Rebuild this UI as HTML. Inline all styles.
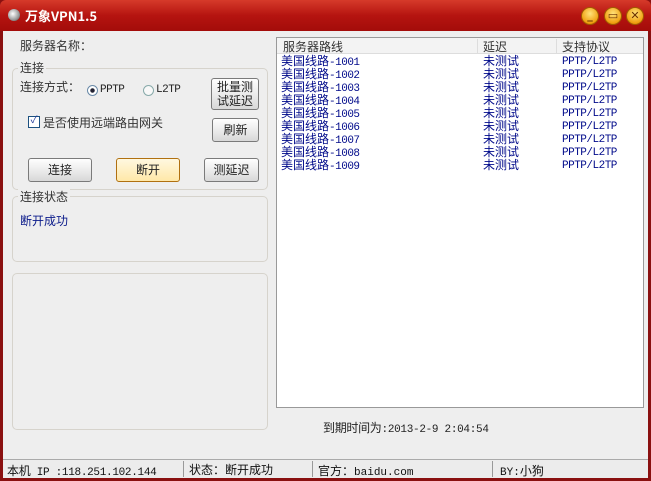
<!DOCTYPE html>
<html><head><meta charset="utf-8"><style>
*{margin:0;padding:0;box-sizing:border-box}
body{width:651px;height:481px;overflow:hidden;background:#8a1010;font-family:"Liberation Mono","Noto Sans CJK SC",monospace;font-size:12px;position:relative}
.a{position:absolute;white-space:nowrap}
#title{left:0;top:0;width:651px;height:31px;background:linear-gradient(#d63a2a,#b51410 50%,#a30c0a);border-radius:6px 6px 0 0}
#client{left:3px;top:31px;width:645px;height:447px;background:#eeeeee}
.grp{border:1px solid #d6d3cc;border-radius:5px}
.btn{border:1px solid #7a7a7a;border-radius:3px;background:linear-gradient(#fefefe,#e8e8e8 60%,#d8d8d8);text-align:center;font-family:"Noto Sans CJK SC",sans-serif;font-size:12px;color:#222}
.lt{font-family:"Noto Sans CJK SC",sans-serif;font-size:12px;color:#333}
.row{color:#000a8a;font-size:12px;line-height:13px}
.row div{height:13px;line-height:13px;overflow:visible}
.row span{font-size:11px;letter-spacing:-0.5px;line-height:10px}
.circ{width:18px;height:18px;border-radius:50%;background:radial-gradient(circle at 50% 35%,#ffe27a,#f0a010 70%,#c07000);border:1px solid #a05a00;color:#6a3000;font-size:11px;font-weight:bold;text-align:center;line-height:16px;font-family:"DejaVu Sans",sans-serif}
</style></head><body>
<div id="title" class="a"></div>
<div class="a" style="left:8px;top:9px;width:12px;height:12px;border-radius:50%;background:radial-gradient(circle at 40% 40%,#fff,#999 60%,#444)"></div>
<div class="a" style="left:25px;top:7px;color:#fff;font-weight:bold;font-size:13px;font-family:'Noto Sans CJK SC',sans-serif;line-height:18px">万象VPN1.5</div>
<div class="a circ" style="left:581px;top:7px">_</div>
<div class="a circ" style="left:604px;top:7px">▭</div>
<div class="a circ" style="left:626px;top:7px">✕</div>
<div id="client" class="a"></div>

<div class="a lt" style="left:20px;top:37px">服务器名称：</div>
<div class="a grp" style="left:12px;top:68px;width:256px;height:122px"></div>
<div class="a lt" style="left:18px;top:59px;background:#eeeeee;padding:0 2px">连接</div>
<div class="a lt" style="left:20px;top:78px">连接方式：</div>
<div class="a" style="left:87px;top:85px;width:11px;height:11px;border-radius:50%;border:1px solid #6a8aa8;background:radial-gradient(#223 30%,#fff 40%)"></div>
<div class="a" style="left:100px;top:84px;font-size:11px;color:#222;letter-spacing:-0.5px">PPTP</div>
<div class="a" style="left:143px;top:85px;width:11px;height:11px;border-radius:50%;border:1px solid #8aa;background:#f8f8f8"></div>
<div class="a" style="left:156px;top:84px;font-size:11px;color:#222;letter-spacing:-0.5px">L2TP</div>
<div class="a btn" style="left:211px;top:78px;width:48px;height:32px;line-height:14px;padding-top:1px">批量测<br>试延迟</div>
<div class="a" style="left:28px;top:116px;width:12px;height:12px;border:1px solid #1c5180;background:#fff;color:#213a9a;font-size:10px;line-height:10px;text-align:center">✓</div>
<div class="a lt" style="left:43px;top:114px">是否使用远端路由网关</div>
<div class="a btn" style="left:212px;top:118px;width:47px;height:24px;line-height:22px">刷新</div>
<div class="a btn" style="left:28px;top:158px;width:64px;height:24px;line-height:22px">连接</div>
<div class="a btn" style="left:116px;top:158px;width:64px;height:24px;line-height:22px;border-color:#b07010;background:linear-gradient(#fff8e0,#ffe8a8)">断开</div>
<div class="a btn" style="left:204px;top:158px;width:55px;height:24px;line-height:22px">测延迟</div>

<div class="a grp" style="left:12px;top:196px;width:256px;height:66px"></div>
<div class="a lt" style="left:18px;top:188px;background:#eeeeee;padding:0 2px">连接状态</div>
<div class="a lt" style="left:20px;top:212px;color:#0a1a8a">断开成功</div>
<div class="a grp" style="left:12px;top:273px;width:256px;height:157px"></div>

<div class="a" style="left:276px;top:37px;width:368px;height:371px;background:#fff;border:1px solid #999"></div>
<div class="a" style="left:277px;top:38px;width:366px;height:16px;background:#f3f3f3;border-bottom:1px solid #ddd"></div>
<div class="a lt" style="left:283px;top:38px">服务器路线</div>
<div class="a lt" style="left:483px;top:38px">延迟</div>
<div class="a lt" style="left:562px;top:38px">支持协议</div>
<div class="a" style="left:477px;top:39px;width:1px;height:14px;background:#ddd"></div>
<div class="a" style="left:556px;top:39px;width:1px;height:14px;background:#ddd"></div>
<div class="a row" style="left:281px;top:56px"><div>美国线路<span>-1001</span></div><div>美国线路<span>-1002</span></div><div>美国线路<span>-1003</span></div><div>美国线路<span>-1004</span></div><div>美国线路<span>-1005</span></div><div>美国线路<span>-1006</span></div><div>美国线路<span>-1007</span></div><div>美国线路<span>-1008</span></div><div>美国线路<span>-1009</span></div></div>
<div class="a row" style="left:483px;top:56px">未测试<br>未测试<br>未测试<br>未测试<br>未测试<br>未测试<br>未测试<br>未测试<br>未测试</div>
<div class="a row" style="left:562px;top:56px;font-size:11px;letter-spacing:-0.5px">PPTP/L2TP<br>PPTP/L2TP<br>PPTP/L2TP<br>PPTP/L2TP<br>PPTP/L2TP<br>PPTP/L2TP<br>PPTP/L2TP<br>PPTP/L2TP<br>PPTP/L2TP</div>

<div class="a" style="left:323px;top:419px;color:#222;font-size:11px;letter-spacing:-0.3px"><span class="lt" style="color:#222">到期时间为</span>:2013-2-9 2:04:54</div>

<div class="a" style="left:3px;top:459px;width:645px;height:19px;background:#ececec;border-top:1px solid #aaa"></div>
<div class="a" style="left:7px;top:462px;color:#111;font-size:11px;letter-spacing:-0.3px"><span class="lt" style="color:#111">本机</span> IP :118.251.102.144</div>
<div class="a" style="left:183px;top:461px;width:1px;height:16px;background:#999"></div>
<div class="a lt" style="left:189px;top:461px;color:#111">状态：断开成功</div>
<div class="a" style="left:312px;top:461px;width:1px;height:16px;background:#999"></div>
<div class="a" style="left:318px;top:462px;color:#111;font-size:11px"><span class="lt" style="color:#111">官方：</span>baidu.com</div>
<div class="a" style="left:492px;top:461px;width:1px;height:16px;background:#999"></div>
<div class="a" style="left:500px;top:462px;color:#111;font-size:11px">BY:<span class="lt" style="color:#111">小狗</span></div>
</body></html>
